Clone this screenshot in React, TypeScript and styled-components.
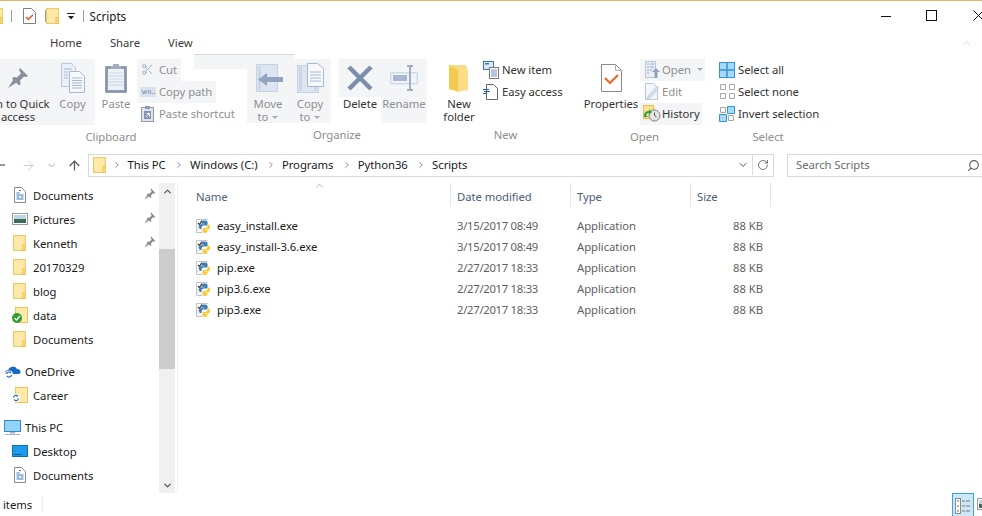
import React from 'react';
import styled, { createGlobalStyle } from 'styled-components';
import { ArrowRight, ArrowUp, ChevronDown, ChevronRight, ChevronUp, RotateCw, Scissors, Search } from 'lucide-react';

const GlobalStyle = createGlobalStyle`
  html, body {
    margin: 0;
    padding: 0;
    background: #fff;
  }
  body {
    font-family: "Noto Sans", "Open Sans", sans-serif;
    font-size: 11.3px;
    letter-spacing: -0.05px;
    color: #1a1a1a;
  }
  svg {
    display: block;
    flex: none;
  }
`;

const Window = styled.div`
  width: 982px;
  height: 516px;
  overflow: hidden;
  display: flex;
  flex-direction: column;
  background: #fff;
`;

const TitleBar = styled.div`
  height: 28px;
  border-top: 1px solid #e5b565;
  display: flex;
  align-items: center;
  flex: none;
`;

const TitleIcons = styled.div`
  display: flex;
  align-items: center;
  margin-left: -10px;
  padding-top: 2px;
`;

const TitleSep = styled.div`
  width: 1px;
  height: 12px;
  background: #a0a0a0;
  margin: 0 ${(p) => p.$right}px 0 ${(p) => p.$left}px;
`;

const TitleText = styled.div`
  font-size: 11.7px;
  padding-top: 2px;
`;

const WindowControls = styled.div`
  margin-left: auto;
  display: flex;
  align-items: center;
  margin-right: -1px;
  padding-top: 1px;
`;

const Tabs = styled.div`
  height: 25px;
  box-sizing: border-box;
  padding-top: 2px;
  display: flex;
  align-items: center;
  padding-left: 50px;
  gap: 28px;
  flex: none;
  position: relative;
`;

const Tab = styled.div`
  color: #3b3b3b;
`;

const Collapse = styled.div`
  position: absolute;
  right: 9px;
  top: 8px;
  color: #b5b5b5;
`;

const Ribbon = styled.div`
  height: 92px;
  flex: none;
  display: flex;
  padding-top: 5px;
  margin-left: -14px;
  box-sizing: border-box;
  position: relative;
`;

const RibbonStrip = styled.div`
  position: absolute;
  left: 208px;
  top: 0;
  width: 101px;
  height: 15px;
  background: #f3f5f7;
  border-top: 1px solid #d9d9d9;
  box-sizing: border-box;
`;

const Group = styled.div`
  width: ${(p) => p.$width}px;
  margin-right: ${(p) => p.$gap ?? 11}px;
  flex: none;
  display: flex;
  flex-direction: column;
  position: relative;
`;

const GroupBody = styled.div`
  height: 66px;
  display: flex;
`;

const GroupLabel = styled.div`
  height: 24px;
  line-height: 24px;
  text-align: center;
  color: #8e8e8e;
`;

const shades = {
  full: '#f3f5f7',
  top: 'linear-gradient(#f3f5f7 38px, transparent 38px)',
  none: 'transparent',
};

const LargeButton = styled.div`
  width: ${(p) => p.$width}px;
  flex: none;
  margin-right: ${(p) => p.$gap ?? 0}px;
  display: flex;
  flex-direction: column;
  align-items: center;
  background: ${(p) => shades[p.$shade ?? 'none']};
  color: ${(p) => (p.$off ? '#8f8f8f' : '#333')};
  text-align: center;
  line-height: 13px;
  white-space: nowrap;
`;

const LargeIcon = styled.div`
  height: 38px;
  display: flex;
  align-items: center;
  justify-content: center;
  flex: none;
  margin-left: ${(p) => p.$shift ?? 0}px;
`;

const DropCaret = styled.span`
  display: inline-block;
  border-left: 3px solid transparent;
  border-right: 3px solid transparent;
  border-top: 3px solid #a9a9a9;
  margin-left: 4px;
  vertical-align: 2px;
`;

const SmallColumn = styled.div`
  display: flex;
  flex-direction: column;
  align-items: flex-start;
  margin-left: ${(p) => p.$left ?? 0}px;
`;

const SmallButton = styled.div`
  height: 22px;
  display: flex;
  align-items: center;
  width: ${(p) => (p.$width ? `${p.$width}px` : 'auto')};
  box-sizing: border-box;
  padding-left: ${(p) => p.$pad ?? 3}px;
  padding-bottom: 1px;
  gap: ${(p) => p.$gapIcon ?? 4}px;
  background: ${(p) => (p.$shade ? '#f3f5f7' : 'transparent')};
  color: ${(p) => (p.$off ? '#8f8f8f' : '#333')};
  white-space: nowrap;
`;

const AddressRow = styled.div`
  height: 22px;
  margin-top: 8px;
  display: flex;
  align-items: center;
  flex: none;
`;

const NavButtons = styled.div`
  width: 88px;
  height: 22px;
  display: flex;
  align-items: center;
  flex: none;
`;

const BackStub = styled.div`
  width: 5px;
  height: 2px;
  background: #9a9a9a;
  margin-right: 16px;
`;

const AddressBox = styled.div`
  width: 686px;
  height: 23px;
  box-sizing: border-box;
  border: 1px solid #d9d9d9;
  display: flex;
  align-items: center;
  padding-left: 4px;
  padding-bottom: 1px;
  flex: none;
`;

const Crumb = styled.span`
  margin: 0 5.7px;
  color: #1a1a1a;
`;

const CrumbSep = styled(ChevronRight)`
  color: #777;
  margin-left: ${(p) => p.$left ?? 3}px;
`;

const AddressEnd = styled.div`
  margin-left: auto;
  display: flex;
  align-items: center;
  height: 100%;
`;

const Refresh = styled.div`
  width: 20px;
  height: 100%;
  border-left: 1px solid #d9d9d9;
  margin-left: 3px;
  display: flex;
  align-items: center;
  justify-content: center;
  color: #555;
`;

const SearchBox = styled.div`
  width: 220px;
  height: 23px;
  margin-left: 13px;
  box-sizing: border-box;
  border: 1px solid #d9d9d9;
  display: flex;
  align-items: center;
  padding-left: 8px;
  padding-bottom: 1px;
  color: #6d6d6d;
  flex: none;
  position: relative;
`;

const SearchGlyph = styled.div`
  color: #555;
  position: absolute;
  left: 179px;
  top: 4px;
`;

const Main = styled.div`
  height: 310px;
  margin-top: 7px;
  display: flex;
  flex: none;
`;

const Sidebar = styled.div`
  width: 159px;
  flex: none;
  overflow: hidden;
`;

const NavRow = styled.div`
  height: 24px;
  display: flex;
  align-items: center;
  padding-left: ${(p) => (p.$top ? 3 : 14)}px;
  margin-top: ${(p) => p.$space ?? 0}px;
  position: relative;
  white-space: nowrap;
`;

const NavIcon = styled.div`
  width: ${(p) => (p.$top ? 18 : 15)}px;
  margin-left: ${(p) => (p.$top ? 0 : -2)}px;
  margin-right: ${(p) => (p.$top ? 4 : 6)}px;
  display: flex;
  justify-content: center;
  flex: none;
`;

const PinMark = styled.div`
  position: absolute;
  right: 3px;
  top: 5px;
`;

const Scrollbar = styled.div`
  width: 16px;
  flex: none;
  background: #f0f0f0;
  display: flex;
  flex-direction: column;
`;

const ScrollButton = styled.div`
  height: 16px;
  flex: none;
  display: flex;
  align-items: center;
  justify-content: center;
  color: #505050;
`;

const ScrollThumb = styled.div`
  height: 120px;
  margin-top: 50px;
  flex: none;
  background: #cdcdcd;
`;

const ScrollFill = styled.div`
  flex: 1;
`;

const Content = styled.div`
  flex: 1;
  margin-left: 2px;
  border-left: 1px solid #f0f0f0;
  position: relative;
`;

const ColumnGrid = styled.div`
  display: grid;
  grid-template-columns: 273px 120px 120px 80px;
  width: 593px;
`;

const HeaderCell = styled.div`
  height: 24px;
  line-height: 28px;
  color: #4c607a;
  box-sizing: border-box;
  border-right: 1px solid #e5e5e5;
  padding-left: ${(p) => (p.$first ? 18 : 6)}px;
`;

const SortCaret = styled.div`
  position: absolute;
  left: 136px;
  top: -3px;
  color: #707070;
`;

const FileList = styled.div`
  padding-top: 8px;
`;

const FileCell = styled.div`
  height: 21px;
  display: flex;
  align-items: center;
  padding-left: ${(p) => (p.$first ? 18 : 6)}px;
  padding-right: ${(p) => (p.$right ? 8 : 0)}px;
  justify-content: ${(p) => (p.$right ? 'flex-end' : 'flex-start')};
  gap: 4px;
  color: ${(p) => (p.$first ? '#1a1a1a' : '#5f5f5f')};
  letter-spacing: ${(p) => (p.$tight ? '-0.3px' : 'inherit')};
  white-space: nowrap;
`;

const StatusBar = styled.div`
  height: 22px;
  flex: none;
  display: flex;
  align-items: center;
  padding-left: 3px;
  position: relative;
`;

const StatusText = styled.span`
  padding-top: 1px;
`;

const StatusDivider = styled.div`
  width: 1px;
  height: 14px;
  background: #e8e8e8;
  margin-left: 10px;
`;

const ViewToggles = styled.div`
  margin-left: auto;
  display: flex;
  align-items: flex-start;
  height: 100%;
  gap: 3px;
  margin-right: -11px;
`;

const ViewToggle = styled.div`
  width: 22px;
  height: 24px;
  box-sizing: border-box;
  border: 1px solid #3ba3de;
  background: #cce8f7;
  display: flex;
  justify-content: center;
  padding-top: 4px;
`;

const ViewThumb = styled.div`
  padding-top: 5px;
`;

const Folder = ({ size = 16 }: { size?: number }) => (
  <svg width={size * 0.8} height={size} viewBox="0 0 13 16">
    <rect x="0.5" y="0.5" width="12" height="15" fill="#fee9a8" stroke="#ecc458" />
    <path d="M10 9.5h2.5V15.5H10Z" fill="#fbdc82" stroke="#ecc458" />
  </svg>
);

const Check = () => (
  <svg width="13" height="16" viewBox="0 0 13 16">
    <path d="M.5.5h8l4 4v11H.5Z" fill="#fff" stroke="#808080" />
    <path d="M3 9l2.4 2.4L10 6.8" fill="none" stroke="#e8622c" strokeWidth="1.5" />
  </svg>
);

const PinIcon = ({ color = '#8a8f99', size = 22 }: { color?: string; size?: number }) => (
  <svg width={size} height={size} viewBox="0 0 22 22">
    <path d="M13 1l8 8-2 1-2-.5-4 4 .5 3.500-1.500 1.500-7-7 1.500-1.500 3.500.5 4-4L12 3Z" fill={color} />
    <path d="M6.500 12.500L1 21l8.500-5.500Z" fill={color} />
  </svg>
);

const CopyPages = () => (
  <svg width="24" height="30" viewBox="0 0 24 30">
    <path d="M.5.500h10l4 4v19H.5Z" fill="#eaf0f8" stroke="#b9c7dc" />
    <path d="M8.500 8.500h10l5 5v16h-15Z" fill="#f6f8fb" stroke="#a9b8cf" />
    <path d="M11 15h10M11 17.500h10M11 20h10M11 22.500h10M11 25h10M3 6h8M3 9h4M3 12h4M3 15h4" stroke="#a9b8cf" />
  </svg>
);

const Clipboard = () => (
  <svg width="22" height="30" viewBox="0 0 22 30">
    <rect x=".75" y="3.750" width="20.500" height="25.500" fill="#8e9bb1" stroke="#7d8aa2" />
    <rect x="3" y="6" width="16" height="21" fill="#eef1f7" />
    <path d="M4 10h14M4 13h14M4 16h14M4 19h14M4 22h14" stroke="#cdd5e3" />
    <path d="M8 3V1h6v2h2v3H6V3Z" fill="#a3aec1" />
  </svg>
);

const CopyPathIcon = () => (
  <svg width="16" height="10" viewBox="0 0 16 10">
    <rect width="16" height="10" fill="#d9e1ee" />
    <path d="M2 3l1.500 4 1-3 1 3 1-4M8 3l1 4M10 3l1 4M12 6.500h1M14 6.500h1" stroke="#7d8aa2" fill="none" strokeWidth=".8" />
  </svg>
);

const PasteShortcutIcon = () => (
  <svg width="13" height="16" viewBox="0 0 13 16">
    <rect x=".5" y="1.500" width="12" height="14" fill="#dfe5ef" stroke="#8e9bb1" />
    <rect x="4" y="0" width="5" height="3" fill="#8e9bb1" />
    <rect x="3" y="5" width="7" height="8" fill="#8395b3" />
    <path d="M5 11l3-3M5.500 7.500H8.500V10.500" stroke="#fff" fill="none" />
  </svg>
);

const MoveIcon = () => (
  <svg width="27" height="28" viewBox="0 0 27 28">
    <rect x=".5" y=".5" width="21" height="27" fill="#dde5f1" stroke="#c6d2e4" />
    <path d="M2 2h3v24H2Z" fill="#cbd7e9" />
    <path d="M10 20l-9-6.500L10 7v4h16v5H10Z" fill="#91a4c2" transform="translate(1 2)" />
  </svg>
);

const CopyToIcon = () => (
  <svg width="27" height="30" viewBox="0 0 27 30">
    <rect x=".5" y="2.500" width="21" height="27" fill="#dde5f1" stroke="#c6d2e4" />
    <path d="M2 4h3v24H2ZM17 4h3v24h-3Z" fill="#cbd7e9" />
    <path d="M10.500.5h10l6 5v18h-16Z" fill="#f7f9fc" stroke="#a9b8cf" />
    <path d="M13 9h11M13 12h11M13 15h11M13 18h11" stroke="#a9b8cf" />
  </svg>
);

const DeleteIcon = () => (
  <svg width="26" height="26" viewBox="0 0 26 26">
    <path d="M2 2l22 22M24 2L2 24" stroke="#7c8eaa" strokeWidth="4.500" />
  </svg>
);

const RenameIcon = () => (
  <svg width="28" height="26" viewBox="0 0 28 26">
    <rect x=".75" y="7.750" width="26.500" height="11" fill="#f1f4f9" stroke="#c3cfe0" />
    <rect x="3" y="10" width="14" height="6" fill="#a9b8d0" />
    <path d="M17 1h6M17 25h6M20 1v24" stroke="#a1afc6" strokeWidth="2" />
  </svg>
);

const NewFolderIcon = () => (
  <svg width="20" height="28" viewBox="0 0 20 28">
    <path d="M0 1h17l2 6v19L9 28V26H0Z" fill="#fbdd88" />
    <path d="M0 1l9 5v22L0 24Z" fill="#f5c84e" />
  </svg>
);

const NewItemIcon = () => (
  <svg width="16" height="18" viewBox="0 0 16 18">
    <rect x=".5" y=".5" width="10" height="8" fill="#dbe9f7" stroke="#3c77b3" />
    <rect x="2" y="2" width="4" height="1.500" fill="#3c77b3" />
    <rect x="6.500" y="6.500" width="9" height="11" fill="#fff" stroke="#777" />
    <path d="M8 9h6M8 11h6M8 13h6M8 15h6" stroke="#6a8fbb" />
  </svg>
);

const EasyAccessIcon = () => (
  <svg width="15" height="16" viewBox="0 0 15 16">
    <path d="M3.500.5h7l4 4v11h-11Z" fill="#fff" stroke="#666" />
    <path d="M0 5.500h6M1 7.500h6M0 9.500h4" stroke="#1f5ea8" />
  </svg>
);

const PropertiesIcon = () => (
  <svg width="21" height="28" viewBox="0 0 21 28">
    <path d="M.5.5h14l6 6v21H.5Z" fill="#fff" stroke="#8a8a8a" />
    <path d="M14.500.5v6h6" fill="none" stroke="#b0b0b0" />
    <path d="M4 14l5 5 8-8" fill="none" stroke="#ee6a2a" strokeWidth="2.200" />
  </svg>
);

const OpenIcon = () => (
  <svg width="15" height="17" viewBox="0 0 15 17">
    <path d="M.5.5h10v16H.5Z" fill="#e9eef6" stroke="#b9c4d6" />
    <path d="M2 3h2M2 6h2M2 9h2M2 12h2M5 3h4M5 6h4M5 9h2" stroke="#97a6bd" />
    <path d="M11 7l4 4h-2.500v6h-3v-6H7Z" fill="#8fa2c0" />
  </svg>
);

const EditIcon = () => (
  <svg width="15" height="17" viewBox="0 0 15 17">
    <path d="M.5.5h8l4 4v12H.5Z" fill="#f3f6fb" stroke="#b9c7dc" />
    <path d="M14 5l-9 10-3 1.500L3 13l9-10Z" fill="#d3def0" stroke="#b4c3da" strokeWidth=".6" />
  </svg>
);

const HistoryIcon = () => (
  <svg width="18" height="17" viewBox="0 0 18 17">
    <rect x=".5" y=".5" width="10" height="13" fill="#fbe193" stroke="#e5bd4d" />
    <circle cx="11.500" cy="10.500" r="5.500" fill="#e4e4e4" stroke="#7d7d7d" />
    <path d="M11.500 7.500v3l2 1.500" stroke="#555" fill="none" />
    <path d="M1 10a5 5 0 0 1 5-4v-2l3 3-3 3V8a3 3 0 0 0-3 2l2 2H1Z" fill="#2f9e3f" />
  </svg>
);

const SelectAllIcon = () => (
  <svg width="16" height="16" viewBox="0 0 16 16">
    <rect x=".5" y=".5" width="15" height="15" fill="#a9d8f8" stroke="#2f97e0" />
    <path d="M8 0v16M0 8h16" stroke="#2f97e0" strokeWidth="1.500" />
  </svg>
);

const SelectNoneIcon = () => (
  <svg width="15" height="15" viewBox="0 0 15 15">
    <path d="M.5.5h5v5h-5ZM9.500.5h5v5h-5ZM.5 9.500h5v5h-5ZM9.500 9.500h5v5h-5Z" fill="#fff" stroke="#a8a8a8" />
  </svg>
);

const InvertIcon = () => (
  <svg width="16" height="16" viewBox="0 0 16 16">
    <path d="M1.500 1.500h5v5h-5ZM9.500 9.500h5v5h-5Z" fill="#fff" stroke="#a8a8a8" />
    <path d="M8.500.5h7v7h-7ZM.5 8.500h7v7h-7Z" fill="#a9d8f8" stroke="#2f97e0" />
  </svg>
);

const PyExe = () => (
  <svg width="17" height="16" viewBox="0 0 17 16">
    <path d="M.5 1.500h11M.5 1.500v13h6" stroke="#c4c4c4" fill="#f7f7f7" />
    <path d="M2 5l1.500 1.500L6 2.500" stroke="#3f3f3f" strokeWidth="1.300" fill="none" />
    <path d="M2 9l1-1M2 11.500l1-1" stroke="#b0b0b0" />
    <path d="M8 2.500c-1.600 0-2.500.7-2.500 2v1.200h3v.6H4.600c-1.100 0-1.600 1-1.600 2.300 0 1.400.6 2.400 1.600 2.400h1v-1.400c0-1.200.9-2 2-2h2.500c.9 0 1.500-.7 1.500-1.500V4.500c0-1.200-1-2-2.400-2Z" fill="#3c7cb4" />
    <path d="M9 15c1.600 0 2.500-.7 2.500-2v-1.200h-3v-.6h3.900c1.100 0 1.600-1 1.600-2.300 0-1.400-.6-2.400-1.600-2.400h-1v1.400c0 1.200-.9 2-2 2H7.900c-.9 0-1.500.7-1.500 1.500V13c0 1.200 1.200 2 2.600 2Z" fill="#f8c934" />
  </svg>
);

const DocIcon = () => (
  <svg width="12" height="16" viewBox="0 0 12 16">
    <path d="M.5.5h7l4 4v11H.5Z" fill="#fff" stroke="#8a8a8a" />
    <path d="M2.500 6h3M2.500 8h7M2.500 10h3M7 10h2.500M2.500 12h7M5 3.500h2" stroke="#2f7dc4" />
  </svg>
);

const PicturesIcon = () => (
  <svg width="16" height="12" viewBox="0 0 16 12">
    <rect x=".5" y=".5" width="15" height="11" fill="#fff" stroke="#9a9a9a" />
    <rect x="2" y="2" width="12" height="4" fill="#bcd6e8" />
    <rect x="2" y="6" width="12" height="4" fill="#3f6b58" />
  </svg>
);

const OneDriveIcon = () => (
  <svg width="17" height="15" viewBox="0 0 17 15">
    <path d="M1 9a3 3 0 0 1 3-3 5 5 0 0 1 9-1 3 3 0 0 1 3.500 3c0 1-.5 2-2 2H3C2 10 1 10 1 9Z" fill="#1669c7" />
    <circle cx="5" cy="10.500" r="4" fill="#fff" />
    <path d="M2.500 10a2.500 2.500 0 0 1 4.500-1M7.500 11a2.500 2.500 0 0 1-4.500 1" stroke="#1b62bf" fill="none" strokeWidth="1.200" />
  </svg>
);

const CareerIcon = () => (
  <svg width="16" height="16" viewBox="0 0 16 16">
    <rect x="3.500" y=".5" width="12" height="15" fill="#fee9a8" stroke="#ecc458" />
    <circle cx="4" cy="11" r="4" fill="#fff" />
    <path d="M1.500 10.500a2.500 2.500 0 0 1 4.500-1M6.500 11.500a2.500 2.500 0 0 1-4.500 1" stroke="#1b62bf" fill="none" strokeWidth="1.200" />
  </svg>
);

const DataIcon = () => (
  <svg width="16" height="16" viewBox="0 0 16 16">
    <rect x="3.500" y=".5" width="12" height="15" fill="#fee9a8" stroke="#ecc458" />
    <circle cx="5" cy="11" r="5" fill="#2f9e2f" />
    <path d="M2.500 11l2 2 3.500-4" stroke="#fff" strokeWidth="1.300" fill="none" />
  </svg>
);

const PcIcon = () => (
  <svg width="17" height="15" viewBox="0 0 17 15">
    <rect x=".5" y=".5" width="16" height="11" fill="#8fd3f8" stroke="#3a87c6" />
    <path d="M6 12h5v1.500H6ZM1 14h15v1H1Z" fill="#a8b3bf" />
  </svg>
);

const DesktopIcon = () => (
  <svg width="16" height="12" viewBox="0 0 16 12">
    <rect x=".5" y=".5" width="15" height="11" fill="#1e9be8" stroke="#0f6db0" />
    <path d="M2 9.500h8" stroke="#0f5f9c" />
  </svg>
);

const DownloadsIcon = () => (
  <svg width="7" height="12" viewBox="0 0 7 12">
    <rect x="0" y="0" width="7" height="12" fill="#2f7dc4" />
  </svg>
);

const DetailsIcon = () => (
  <svg width="16" height="16" viewBox="0 0 16 16">
    <rect x=".5" y=".5" width="5" height="15" fill="#fff" stroke="#8a8a8a" />
    <path d="M2 3h2M2 8h2" stroke="#666" />
    <path d="M2 13h2" stroke="#c33" />
    <path d="M7 3h3M11 3h4M7 8h3M11 8h4M7 13h3M11 13h4" stroke="#777" />
  </svg>
);

const files = [
  { name: 'easy_install.exe', date: '3/15/2017 08:49' },
  { name: 'easy_install-3.6.exe', date: '3/15/2017 08:49' },
  { name: 'pip.exe', date: '2/27/2017 18:33' },
  { name: 'pip3.6.exe', date: '2/27/2017 18:33' },
  { name: 'pip3.exe', date: '2/27/2017 18:33' },
];

const crumbs = ['This PC', 'Windows (C:)', 'Programs', 'Python36', 'Scripts'];

export default function App() {
  return (
    <Window>
      <GlobalStyle />
      <TitleBar>
        <TitleIcons>
          <Folder size={16} />
          <TitleSep $left={8} $right={11} />
          <Check />
          <TitleSep $left={9} $right={0} />
          <Folder size={16} />
          <svg width="8" height="7" viewBox="0 0 8 7" style={{ marginLeft: 8 }}>
            <path d="M0 0h8v1H0ZM1 3h6L4 6.500Z" fill="#222" />
          </svg>
          <TitleSep $left={8} $right={6} />
        </TitleIcons>
        <TitleText>Scripts</TitleText>
        <WindowControls>
          <svg width="102" height="12" viewBox="0 0 102 12">
            <path d="M0 6.500h10" stroke="#111" />
            <rect x="45.500" y=".5" width="10" height="10" fill="none" stroke="#111" />
            <path d="M92.500 .5l10 10M102.500 .5l-10 10" stroke="#111" />
          </svg>
        </WindowControls>
      </TitleBar>
      <Tabs>
        <Tab>Home</Tab>
        <Tab>Share</Tab>
        <Tab>View</Tab>
        <Collapse>
          <ChevronUp size={12} strokeWidth={1.2} />
        </Collapse>
      </Tabs>
      <Ribbon>
        <RibbonStrip />
        <Group $width={250}>
          <GroupBody>
            <LargeButton $width={64} $shade="full">
              <LargeIcon><PinIcon size={22} /></LargeIcon>
              <span>Pin to Quick</span>
              <span>access</span>
            </LargeButton>
            <LargeButton $width={45} $shade="full" $off>
              <LargeIcon><CopyPages /></LargeIcon>
              <span>Copy</span>
            </LargeButton>
            <LargeButton $width={42} $off>
              <LargeIcon><Clipboard /></LargeIcon>
              <span>Paste</span>
            </LargeButton>
            <SmallColumn>
              <SmallButton $width={44} $shade $off $pad={4} $gapIcon={5}>
                <Scissors size={13} strokeWidth={1.4} color="#8a99b3" />
                Cut
              </SmallButton>
              <SmallButton $width={79} $shade $off $pad={3} $gapIcon={3}>
                <CopyPathIcon />
                Copy path
              </SmallButton>
              <SmallButton $off $pad={4} $gapIcon={5}>
                <PasteShortcutIcon />
                Paste shortcut
              </SmallButton>
            </SmallColumn>
          </GroupBody>
          <GroupLabel>Clipboard</GroupLabel>
        </Group>
        <Group $width={180}>
          <GroupBody>
            <LargeButton $width={42} $shade="full" $off>
              <LargeIcon $shift={3}><MoveIcon /></LargeIcon>
              <span>Move</span>
              <span>to<DropCaret /></span>
            </LargeButton>
            <LargeButton $width={42} $gap={8} $shade="full" $off>
              <LargeIcon><CopyToIcon /></LargeIcon>
              <span>Copy</span>
              <span>to<DropCaret /></span>
            </LargeButton>
            <LargeButton $width={42} $shade="top">
              <LargeIcon><DeleteIcon /></LargeIcon>
              <span>Delete</span>
            </LargeButton>
            <LargeButton $width={46} $shade="full" $off>
              <LargeIcon><RenameIcon /></LargeIcon>
              <span>Rename</span>
            </LargeButton>
          </GroupBody>
          <GroupLabel>Organize</GroupLabel>
        </Group>
        <Group $width={135}>
          <GroupBody>
            <LargeButton $width={42}>
              <LargeIcon><NewFolderIcon /></LargeIcon>
              <span>New</span>
              <span>folder</span>
            </LargeButton>
            <SmallColumn $left={2}>
              <SmallButton $pad={1} $gapIcon={3}><NewItemIcon />New item</SmallButton>
              <SmallButton $pad={1} $gapIcon={4}><EasyAccessIcon />Easy access</SmallButton>
            </SmallColumn>
          </GroupBody>
          <GroupLabel>New</GroupLabel>
        </Group>
        <Group $width={121}>
          <GroupBody>
            <LargeButton $width={54} $gap={2}>
              <LargeIcon><PropertiesIcon /></LargeIcon>
              <span>Properties</span>
            </LargeButton>
            <SmallColumn>
              <SmallButton $width={65} $shade $off $pad={5} $gapIcon={2}>
                <OpenIcon />Open<DropCaret />
              </SmallButton>
              <SmallButton $off $pad={5} $gapIcon={2}><EditIcon />Edit</SmallButton>
              <SmallButton $width={62} $shade $pad={3} $gapIcon={1}><HistoryIcon />History</SmallButton>
            </SmallColumn>
          </GroupBody>
          <GroupLabel>Open</GroupLabel>
        </Group>
        <Group $width={104} $gap={0}>
          <GroupBody>
            <SmallColumn>
              <SmallButton $pad={3} $gapIcon={3}><SelectAllIcon />Select all</SmallButton>
              <SmallButton $pad={4} $gapIcon={3}><SelectNoneIcon />Select none</SmallButton>
              <SmallButton $pad={3} $gapIcon={3}><InvertIcon />Invert selection</SmallButton>
            </SmallColumn>
          </GroupBody>
          <GroupLabel>Select</GroupLabel>
        </Group>
      </Ribbon>
      <AddressRow>
        <NavButtons>
          <BackStub />
          <ArrowRight size={15} strokeWidth={1.5} color="#c8c8c8" />
          <ChevronDown size={11} strokeWidth={2} color="#9a9a9a" style={{ marginLeft: 10 }} />
          <ArrowUp size={15} strokeWidth={2} color="#555" style={{ marginLeft: 10 }} />
        </NavButtons>
        <AddressBox>
          <Folder size={16} />
          {crumbs.map((crumb) => (
            <React.Fragment key={crumb}>
              <CrumbSep size={10} strokeWidth={2} $left={crumb === 'This PC' ? 6 : 3} />
              <Crumb>{crumb}</Crumb>
            </React.Fragment>
          ))}
          <AddressEnd>
            <ChevronDown size={12} strokeWidth={2} color="#555" />
            <Refresh><RotateCw size={12} strokeWidth={1.6} /></Refresh>
          </AddressEnd>
        </AddressBox>
        <SearchBox>
          Search Scripts
          <SearchGlyph><Search size={13} strokeWidth={2} style={{ transform: 'scaleX(-1)' }} /></SearchGlyph>
        </SearchBox>
      </AddressRow>
      <Main>
        <Sidebar>
          <NavRow><NavIcon><DocIcon /></NavIcon>Documents<PinMark><PinIcon color="#8c8c8c" size={12} /></PinMark></NavRow>
          <NavRow><NavIcon><PicturesIcon /></NavIcon>Pictures<PinMark><PinIcon color="#8c8c8c" size={12} /></PinMark></NavRow>
          <NavRow><NavIcon><Folder /></NavIcon>Kenneth<PinMark><PinIcon color="#8c8c8c" size={12} /></PinMark></NavRow>
          <NavRow><NavIcon><Folder /></NavIcon>20170329</NavRow>
          <NavRow><NavIcon><Folder /></NavIcon>blog</NavRow>
          <NavRow><NavIcon><DataIcon /></NavIcon>data</NavRow>
          <NavRow><NavIcon><Folder /></NavIcon>Documents</NavRow>
          <NavRow $top $space={8}><NavIcon $top><OneDriveIcon /></NavIcon>OneDrive</NavRow>
          <NavRow><NavIcon><CareerIcon /></NavIcon>Career</NavRow>
          <NavRow $top $space={8}><NavIcon $top><PcIcon /></NavIcon>This PC</NavRow>
          <NavRow><NavIcon><DesktopIcon /></NavIcon>Desktop</NavRow>
          <NavRow><NavIcon><DocIcon /></NavIcon>Documents</NavRow>
          <NavRow><NavIcon><DownloadsIcon /></NavIcon></NavRow>
        </Sidebar>
        <Scrollbar>
          <ScrollButton><ChevronUp size={11} strokeWidth={2.6} /></ScrollButton>
          <ScrollThumb />
          <ScrollFill />
          <ScrollButton><ChevronDown size={11} strokeWidth={2.6} /></ScrollButton>
        </Scrollbar>
        <Content>
          <SortCaret><ChevronUp size={11} strokeWidth={1.2} /></SortCaret>
          <ColumnGrid>
            <HeaderCell $first>Name</HeaderCell>
            <HeaderCell>Date modified</HeaderCell>
            <HeaderCell>Type</HeaderCell>
            <HeaderCell>Size</HeaderCell>
          </ColumnGrid>
          <FileList>
            {files.map((file) => (
              <ColumnGrid key={file.name}>
                <FileCell $first><PyExe />{file.name}</FileCell>
                <FileCell $tight>{file.date}</FileCell>
                <FileCell>Application</FileCell>
                <FileCell $right>88 KB</FileCell>
              </ColumnGrid>
            ))}
          </FileList>
        </Content>
      </Main>
      <StatusBar>
        <StatusText>items</StatusText>
        <StatusDivider />
        <ViewToggles>
          <ViewToggle><DetailsIcon /></ViewToggle>
          <ViewThumb><PicturesIcon /></ViewThumb>
        </ViewToggles>
      </StatusBar>
    </Window>
  );
}
